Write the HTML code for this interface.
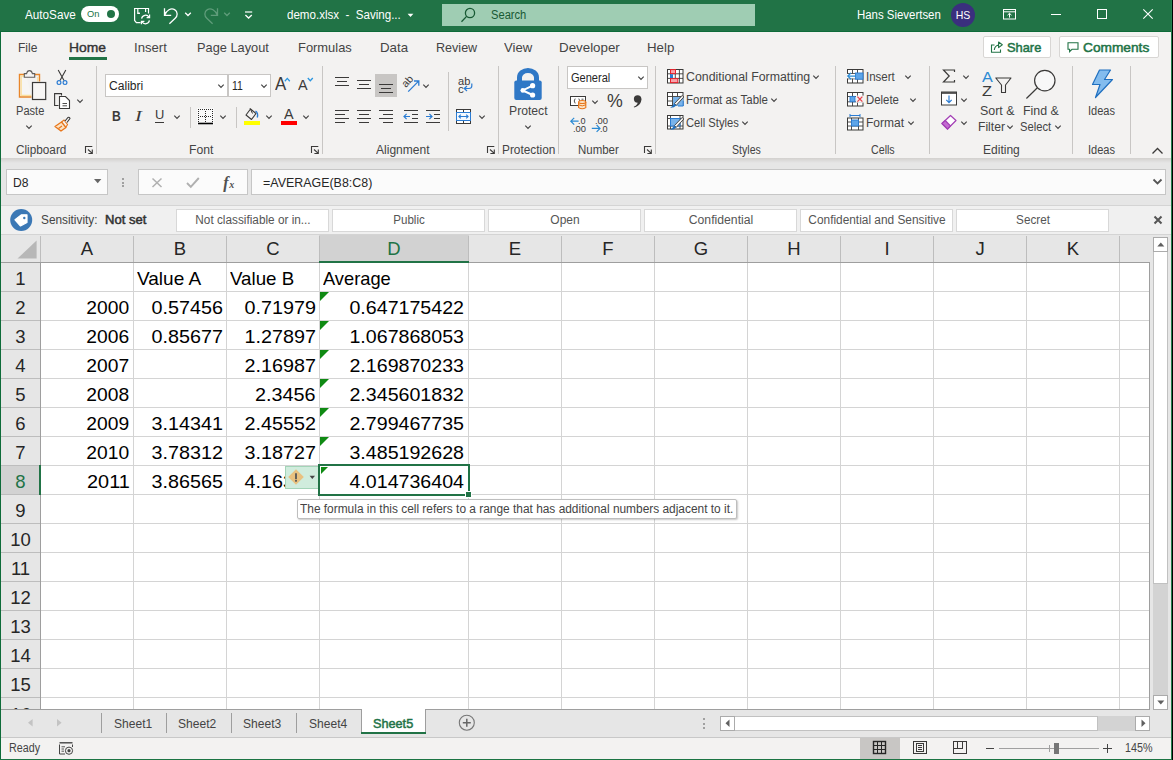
<!DOCTYPE html>
<html><head><meta charset="utf-8"><title>demo.xlsx - Excel</title><style>
html,body{margin:0;padding:0;}
body{width:1173px;height:760px;overflow:hidden;position:relative;background:#f3f2f1;font-family:"Liberation Sans",sans-serif;}
.a{position:absolute;box-sizing:border-box;}
.t{white-space:nowrap;}
svg{overflow:visible;}
</style></head><body>
<div class="a" style="left:0px;top:0px;width:1173px;height:31px;background:#217346;"></div>
<div class="a" style="left:0px;top:31px;width:1173px;height:1px;background:#0e6b39;"></div>
<div class="a" style="left:442px;top:4px;width:313px;height:22px;background:#9fcdb3;"></div>
<div class="a t" id="t1" style="top:6px;line-height:18px;height:18px;font-size:12.5px;color:#fff;left:24.5px;transform-origin:0 50%;transform:scaleX(0.9369);">AutoSave</div>
<div class="a" style="left:81px;top:6px;width:38px;height:16px;background:#fff;border-radius:8px;"></div>
<div class="a t" id="t2" style="top:6px;line-height:16px;height:16px;font-size:9.5px;color:#217346;left:86.8px;transform-origin:0 50%;transform:scaleX(0.9773);">On</div>
<div class="a" style="left:106.8px;top:10px;width:8.2px;height:8.2px;background:#217346;border-radius:50%;"></div>
<svg class="a" style="left:134px;top:7px;" width="17" height="18" viewBox="0 0 17 18"><path d="M14.5 6.5 V1.5 H0.6 V13.5 L2.4 15.6 H6.5" fill="none" stroke="#fff" stroke-width="1.2"/><path d="M3.8 1.5 V6.3 H5.6 M11.6 1.5 V5" fill="none" stroke="#fff" stroke-width="1.2"/><path d="M3.8 6.3 H6" stroke="#fff" stroke-width="1.2"/><path d="M7.6 11.6 A4 4 0 0 1 15 10.2 M15.6 7.6 V10.6 H12.6 M15.4 13.4 A4 4 0 0 1 8 14.8 M7.4 17.2 V14.3 H10.4" fill="none" stroke="#fff" stroke-width="1.2"/></svg>
<svg class="a" style="left:163px;top:7px;" width="17" height="18" viewBox="0 0 17 18"><path d="M1.5 1.2 V8.3 H8.2 M1.7 8.1 C3.5 3.2 8 0.6 11.6 2.6 C15.2 4.8 14.6 9 12.2 11.2 L6.4 16.8" fill="none" stroke="#fff" stroke-width="1.3"/></svg>
<svg class="a" style="left:182.5px;top:9.9px;" width="10" height="8" viewBox="0 0 10 8"><path d="M2.2 2.7 L5 5.5 L7.8 2.7" fill="none" stroke="#fff" stroke-width="1.3"/></svg>
<svg class="a" style="left:202px;top:7px;" width="17" height="18" viewBox="0 0 17 18"><path d="M15.5 1.2 V8.3 H8.8 M15.3 8.1 C13.5 3.2 9 0.6 5.4 2.6 C1.8 4.8 2.4 9 4.8 11.2 L10.6 16.8" fill="none" stroke="#5f9c7a" stroke-width="1.3"/></svg>
<svg class="a" style="left:221.5px;top:9.9px;" width="10" height="8" viewBox="0 0 10 8"><path d="M2.2 2.7 L5 5.5 L7.8 2.7" fill="none" stroke="#5f9c7a" stroke-width="1.3"/></svg>
<svg class="a" style="left:244px;top:11px;" width="10" height="9" viewBox="0 0 10 9"><path d="M1 1 H8.2" stroke="#fff" stroke-width="1.2"/><path d="M1.4 4 L4.6 7 L7.8 4" fill="none" stroke="#fff" stroke-width="1.3"/></svg>
<div class="a t" id="t3" style="top:6px;line-height:18px;height:18px;font-size:12.5px;color:#fff;left:287px;transform-origin:0 50%;transform:scaleX(0.9254);">demo.xlsx&nbsp; -&nbsp; Saving...</div>
<svg class="a" style="left:407px;top:13px;" width="8" height="5" viewBox="0 0 8 5"><path d="M0.6 0.8 L6.4 0.8 L3.5 4 Z" fill="#fff"/></svg>
<div class="a t" id="t4" style="top:6px;line-height:18px;height:18px;font-size:12.5px;color:#185a34;left:491px;transform-origin:0 50%;transform:scaleX(0.8912);">Search</div>
<svg class="a" style="left:459px;top:6px;" width="18" height="18" viewBox="0 0 18 18"><circle cx="11" cy="7" r="4.6" fill="none" stroke="#185a34" stroke-width="1.3"/><path d="M7.6 10.4 L2.5 15.8" stroke="#185a34" stroke-width="1.3"/></svg>
<div class="a t" id="t5" style="top:6px;line-height:18px;height:18px;font-size:12.5px;color:#fff;left:857px;transform-origin:0 50%;transform:scaleX(0.9137);">Hans Sievertsen</div>
<div class="a" style="left:951px;top:3px;width:24px;height:24px;background:#3a2f7e;border-radius:50%;"></div>
<div class="a t" id="t6" style="top:7px;line-height:16px;height:16px;font-size:10.5px;color:#fff;left:663px;width:600px;text-align:center;transform-origin:50% 50%;">HS</div>
<svg class="a" style="left:1003px;top:9px;" width="14" height="11" viewBox="0 0 14 11"><rect x="0.5" y="0.5" width="12" height="9.5" fill="none" stroke="#fff" stroke-width="1"/><path d="M0.5 2.8 H12.5" stroke="#fff" stroke-width="1"/><path d="M6.5 8.6 V4.4 M4.5 6.2 L6.5 4.3 L8.5 6.2" fill="none" stroke="#fff" stroke-width="1"/></svg>
<div class="a" style="left:1051px;top:14px;width:10px;height:1px;background:#fff;"></div>
<div class="a" style="left:1097px;top:9px;width:10px;height:10px;border:1px solid #fff;"></div>
<svg class="a" style="left:1143px;top:9px;" width="10" height="10" viewBox="0 0 10 10"><path d="M0.3 0.3 L9.7 9.7 M9.7 0.3 L0.3 9.7" stroke="#fff" stroke-width="1.1"/></svg>
<div class="a" style="left:1px;top:32px;width:1170px;height:30px;background:#f3f2f1;"></div>
<div class="a t" id="t7" style="top:38px;line-height:20px;height:20px;font-size:13.3px;color:#444;left:18px;transform-origin:0 50%;transform:scaleX(0.9050);">File</div>
<div class="a t" id="t8" style="top:38px;line-height:20px;height:20px;font-size:13.3px;color:#444;left:134px;transform-origin:0 50%;transform:scaleX(0.9860);">Insert</div>
<div class="a t" id="t9" style="top:38px;line-height:20px;height:20px;font-size:13.3px;color:#444;left:197px;transform-origin:0 50%;transform:scaleX(0.9615);">Page Layout</div>
<div class="a t" id="t10" style="top:38px;line-height:20px;height:20px;font-size:13.3px;color:#444;left:298px;transform-origin:0 50%;transform:scaleX(0.9707);">Formulas</div>
<div class="a t" id="t11" style="top:38px;line-height:20px;height:20px;font-size:13.3px;color:#444;left:379.7px;transform-origin:0 50%;transform:scaleX(1.0002);">Data</div>
<div class="a t" id="t12" style="top:38px;line-height:20px;height:20px;font-size:13.3px;color:#444;left:436px;transform-origin:0 50%;transform:scaleX(0.9448);">Review</div>
<div class="a t" id="t13" style="top:38px;line-height:20px;height:20px;font-size:13.3px;color:#444;left:503.8px;transform-origin:0 50%;transform:scaleX(0.9862);">View</div>
<div class="a t" id="t14" style="top:38px;line-height:20px;height:20px;font-size:13.3px;color:#444;left:559px;transform-origin:0 50%;transform:scaleX(1.0031);">Developer</div>
<div class="a t" id="t15" style="top:38px;line-height:20px;height:20px;font-size:13.3px;color:#444;left:647px;transform-origin:0 50%;transform:scaleX(0.9978);">Help</div>
<div class="a t" id="t16" style="top:38px;line-height:20px;height:20px;font-size:13.3px;color:#333;left:69px;transform-origin:0 50%;transform:scaleX(1.0427);-webkit-text-stroke:0.4px #333;">Home</div>
<div class="a" style="left:69px;top:57px;width:38px;height:3px;background:#217346;"></div>
<div class="a" style="left:983px;top:36px;width:68px;height:22px;background:#fff;border:1px solid #d8d6d4;border-radius:2px;"></div>
<div class="a" style="left:1059px;top:36px;width:100px;height:22px;background:#fff;border:1px solid #d8d6d4;border-radius:2px;"></div>
<div class="a t" id="t17" style="top:38px;line-height:20px;height:20px;font-size:13.3px;color:#217346;left:1006.6px;transform-origin:0 50%;transform:scaleX(0.9666);-webkit-text-stroke:0.5px #217346;">Share</div>
<div class="a t" id="t18" style="top:38px;line-height:20px;height:20px;font-size:13.3px;color:#217346;left:1082.6px;transform-origin:0 50%;transform:scaleX(1.0312);-webkit-text-stroke:0.5px #217346;">Comments</div>
<svg class="a" style="left:990px;top:40px;" width="15" height="14" viewBox="0 0 15 14"><path d="M4.5 5 H1.5 V12.2 H10.5 V9.5" fill="none" stroke="#217346" stroke-width="1.1"/><path d="M4.3 10 C4.6 7 6.5 5.3 9 5 M8.6 2 L12.3 4.7 L8.6 7.6 Z" fill="none" stroke="#217346" stroke-width="1.1" stroke-linejoin="round"/></svg>
<svg class="a" style="left:1066px;top:40px;" width="15" height="14" viewBox="0 0 15 14"><path d="M2 2.8 H12 V9.3 H6 L3.6 11.6 V9.3 H2 Z" fill="none" stroke="#217346" stroke-width="1.1"/></svg>
<div class="a" style="left:96px;top:66px;width:1px;height:88px;background:#c8c6c4;"></div>
<div class="a" style="left:322px;top:66px;width:1px;height:88px;background:#c8c6c4;"></div>
<div class="a" style="left:498px;top:66px;width:1px;height:88px;background:#c8c6c4;"></div>
<div class="a" style="left:558px;top:66px;width:1px;height:88px;background:#c8c6c4;"></div>
<div class="a" style="left:655px;top:66px;width:1px;height:88px;background:#c8c6c4;"></div>
<div class="a" style="left:835px;top:66px;width:1px;height:88px;background:#c8c6c4;"></div>
<div class="a" style="left:929px;top:66px;width:1px;height:88px;background:#c8c6c4;"></div>
<div class="a" style="left:1072px;top:66px;width:1px;height:88px;background:#c8c6c4;"></div>
<div class="a" style="left:1130px;top:66px;width:1px;height:88px;background:#c8c6c4;"></div>
<div class="a" style="left:1px;top:158px;width:1170px;height:5px;background:linear-gradient(#d2d0ce,#e6e6e6);"></div>
<svg class="a" style="left:18px;top:69px;" width="30" height="32" viewBox="0 0 30 32"><path d="M8 5.5 H1.5 V28 H13.5" fill="#f6f5f4" stroke="#e8862a" stroke-width="1.4"/><path d="M7 7.2 H3.2 V26.3 H13.5" fill="none" stroke="#fbdf9a" stroke-width="1.2"/><path d="M17 5.5 H21.5 V12.5" fill="none" stroke="#e8862a" stroke-width="1.4"/><path d="M19.8 8 V12.5" fill="none" stroke="#fbdf9a" stroke-width="1.2"/><path d="M6.3 8.2 V4.6 H8.6 C9.4 0.6 13.6 0.6 14.4 4.6 H16.7 V8.2 Z" fill="#f6f5f4" stroke="#605e5c" stroke-width="1.1"/><rect x="14.5" y="13.5" width="13.2" height="17" fill="#f7f6f5" stroke="#3b3a39" stroke-width="1.2"/></svg>
<div class="a t" id="t19" style="top:102px;line-height:18px;height:18px;font-size:12px;color:#444;left:15.8px;transform-origin:0 50%;transform:scaleX(0.9222);">Paste</div>
<svg class="a" style="left:24.3px;top:122.5px;" width="10" height="8" viewBox="0 0 10 8"><path d="M2.3 2.7 L5 5.4 L7.7 2.7" fill="none" stroke="#444" stroke-width="1.2"/></svg>
<svg class="a" style="left:56px;top:69px;" width="12" height="17" viewBox="0 0 12 17"><path d="M2.2 1 L8 11.5 M9.8 1 L4 11.5" stroke="#3b3a39" stroke-width="1.1" fill="none"/><circle cx="3" cy="13.6" r="1.9" fill="none" stroke="#2b7cd3" stroke-width="1.2"/><circle cx="9" cy="13.6" r="1.9" fill="none" stroke="#2b7cd3" stroke-width="1.2"/></svg>
<svg class="a" style="left:54px;top:93px;" width="17" height="17" viewBox="0 0 17 17"><path d="M4.5 12.5 H0.6 V0.6 H7.5 V2.5" fill="none" stroke="#3b3a39" stroke-width="1.1"/><path d="M5.5 3.5 H11.5 L15.5 7.5 V15.5 H5.5 Z" fill="#fff" stroke="#3b3a39" stroke-width="1.1"/><path d="M8.5 10.5 H13 M8.5 12.8 H13" stroke="#3b3a39" stroke-width="0.9"/></svg>
<svg class="a" style="left:74.6px;top:97px;" width="10" height="8" viewBox="0 0 10 8"><path d="M2.3 2.7 L5 5.4 L7.7 2.7" fill="none" stroke="#444" stroke-width="1.2"/></svg>
<svg class="a" style="left:54px;top:116px;" width="17" height="16" viewBox="0 0 17 16"><path d="M1 10.5 L7.5 6 L12 11.5 L7 15 Z" fill="#fbe3c5" stroke="#e8761a" stroke-width="1.3" stroke-linejoin="round"/><path d="M4.5 12.5 L8 10 M7.5 6 L10 4 L13.5 8.5 L12 11" fill="none" stroke="#e8761a" stroke-width="1.1"/><path d="M11 5 L14 1.5 Q15.5 0.8 16 2.5 L13 6.5" fill="#f3f2f1" stroke="#3b3a39" stroke-width="1.1"/></svg>
<div class="a t" id="t20" style="top:141px;line-height:18px;height:18px;font-size:12px;color:#444;left:15.7px;transform-origin:0 50%;transform:scaleX(0.9810);">Clipboard</div>
<svg class="a" style="left:85px;top:146px;" width="9" height="9" viewBox="0 0 9 9"><path d="M0.5 7 V0.5 H7.3" fill="none" stroke="#3b3a39" stroke-width="1.1"/><path d="M3 3.5 L7 7.2 M7.3 3.6 V7.5 H3.4" fill="none" stroke="#3b3a39" stroke-width="1.1"/></svg>
<div class="a" style="left:105px;top:74px;width:123px;height:23px;background:#fff;border:1px solid #c8c6c4;"></div>
<div class="a" style="left:228px;top:74px;width:43px;height:23px;background:#fff;border:1px solid #c8c6c4;border-left:none;"></div>
<div class="a" style="left:227px;top:74px;width:2px;height:23px;background:#c8c6c4;"></div>
<div class="a t" id="t21" style="top:77px;line-height:18px;height:18px;font-size:12.5px;color:#262626;left:108.6px;transform-origin:0 50%;transform:scaleX(0.9679);">Calibri</div>
<div class="a t" id="t22" style="top:77px;line-height:18px;height:18px;font-size:12.5px;color:#262626;left:232px;transform-origin:0 50%;transform:scaleX(0.8318);">11</div>
<svg class="a" style="left:216.3px;top:82.3px;" width="10" height="8" viewBox="0 0 10 8"><path d="M2.3 2.7 L5 5.4 L7.7 2.7" fill="none" stroke="#444" stroke-width="1.2"/></svg>
<svg class="a" style="left:259px;top:82.3px;" width="10" height="8" viewBox="0 0 10 8"><path d="M2.3 2.7 L5 5.4 L7.7 2.7" fill="none" stroke="#444" stroke-width="1.2"/></svg>
<div class="a t" id="t23" style="top:72px;line-height:24px;height:24px;font-size:18px;color:#3b3a39;left:275.2px;transform-origin:0 50%;transform:scaleX(0.9321);">A</div>
<svg class="a" style="left:284px;top:77px;" width="7" height="5" viewBox="0 0 7 5"><path d="M0.8 4.2 L3.3 1.4 L5.8 4.2" fill="none" stroke="#2b95e0" stroke-width="1.3"/></svg>
<div class="a t" id="t24" style="top:75px;line-height:20px;height:20px;font-size:14.5px;color:#3b3a39;left:298px;transform-origin:0 50%;transform:scaleX(0.9926);">A</div>
<svg class="a" style="left:306.5px;top:77px;" width="7" height="5" viewBox="0 0 7 5"><path d="M0.8 1 L3.3 3.8 L5.8 1" fill="none" stroke="#2b95e0" stroke-width="1.3"/></svg>
<div class="a t" id="t25" style="top:106px;line-height:20px;height:20px;font-size:14px;color:#3b3a39;font-weight:bold;left:112px;transform-origin:0 50%;transform:scaleX(0.8691);">B</div>
<div class="a t" id="t26" style="top:106px;line-height:20px;height:20px;font-size:15px;color:#3b3a39;font-family:'Liberation Serif',serif;left:135px;transform-origin:0 50%;transform:scaleX(1.3600);"><i>I</i></div>
<div class="a t" id="t27" style="top:105px;line-height:20px;height:20px;font-size:13.5px;color:#3b3a39;left:155px;transform-origin:0 50%;transform:scaleX(0.9538);">U</div>
<div class="a" style="left:155px;top:122px;width:9px;height:1px;background:#3b3a39;"></div>
<svg class="a" style="left:172px;top:113px;" width="10" height="8" viewBox="0 0 10 8"><path d="M2.3 2.7 L5 5.4 L7.7 2.7" fill="none" stroke="#444" stroke-width="1.2"/></svg>
<div class="a" style="left:190px;top:107px;width:1px;height:21px;background:#c8c6c4;"></div>
<svg class="a" style="left:197px;top:108px;" width="17" height="17" viewBox="0 0 17 17"><rect x="0" y="0" width="17" height="17" fill="#fafafa"/><rect x="1" y="1" width="1" height="1" fill="#2b2a29"/><rect x="3" y="1" width="1" height="1" fill="#2b2a29"/><rect x="5" y="1" width="1" height="1" fill="#2b2a29"/><rect x="7" y="1" width="1" height="1" fill="#2b2a29"/><rect x="9" y="1" width="1" height="1" fill="#2b2a29"/><rect x="11" y="1" width="1" height="1" fill="#2b2a29"/><rect x="13" y="1" width="1" height="1" fill="#2b2a29"/><rect x="15" y="1" width="1" height="1" fill="#2b2a29"/><rect x="1" y="3" width="1" height="1" fill="#2b2a29"/><rect x="15" y="3" width="1" height="1" fill="#2b2a29"/><rect x="1" y="5" width="1" height="1" fill="#2b2a29"/><rect x="15" y="5" width="1" height="1" fill="#2b2a29"/><rect x="1" y="7" width="1" height="1" fill="#2b2a29"/><rect x="15" y="7" width="1" height="1" fill="#2b2a29"/><rect x="1" y="9" width="1" height="1" fill="#2b2a29"/><rect x="15" y="9" width="1" height="1" fill="#2b2a29"/><rect x="1" y="11" width="1" height="1" fill="#2b2a29"/><rect x="15" y="11" width="1" height="1" fill="#2b2a29"/><rect x="1" y="13" width="1" height="1" fill="#2b2a29"/><rect x="15" y="13" width="1" height="1" fill="#2b2a29"/><rect x="8" y="3" width="1" height="1" fill="#2b2a29"/><rect x="8" y="5" width="1" height="1" fill="#2b2a29"/><rect x="8" y="11" width="1" height="1" fill="#2b2a29"/><rect x="8" y="13" width="1" height="1" fill="#2b2a29"/><rect x="3" y="8" width="1" height="1" fill="#2b2a29"/><rect x="5" y="8" width="1" height="1" fill="#2b2a29"/><rect x="11" y="8" width="1" height="1" fill="#2b2a29"/><rect x="13" y="8" width="1" height="1" fill="#2b2a29"/><rect x="8" y="7" width="1" height="1" fill="#2b2a29"/><rect x="7" y="8" width="1" height="1" fill="#2b2a29"/><rect x="9" y="8" width="1" height="1" fill="#2b2a29"/><rect x="8" y="9" width="1" height="1" fill="#2b2a29"/><rect x="1" y="14.7" width="15" height="1.6" fill="#000"/></svg>
<svg class="a" style="left:218.4px;top:113.4px;" width="10" height="8" viewBox="0 0 10 8"><path d="M2.3 2.7 L5 5.4 L7.7 2.7" fill="none" stroke="#444" stroke-width="1.2"/></svg>
<div class="a" style="left:236px;top:107px;width:1px;height:21px;background:#c8c6c4;"></div>
<svg class="a" style="left:244px;top:107px;" width="17" height="15" viewBox="0 0 17 15"><path d="M6.5 2 L2 8 L7.5 12.5 L12 6.5 Z" fill="none" stroke="#3b3a39" stroke-width="1.1" stroke-linejoin="round"/><path d="M8.5 6.5 L6 1.2" stroke="#3b3a39" stroke-width="1"/><path d="M11.5 4 Q14.5 6 13.3 10.5" fill="none" stroke="#2b7cd3" stroke-width="1.4"/></svg>
<div class="a" style="left:244px;top:121px;width:16px;height:4px;background:#ffff00;"></div>
<svg class="a" style="left:264px;top:113px;" width="10" height="8" viewBox="0 0 10 8"><path d="M2.3 2.7 L5 5.4 L7.7 2.7" fill="none" stroke="#444" stroke-width="1.2"/></svg>
<div class="a t" id="t28" style="top:104px;line-height:20px;height:20px;font-size:14.5px;color:#3b3a39;left:284.2px;transform-origin:0 50%;transform:scaleX(0.9926);">A</div>
<div class="a" style="left:281px;top:121px;width:16px;height:4px;background:#ff0000;"></div>
<svg class="a" style="left:301px;top:113px;" width="10" height="8" viewBox="0 0 10 8"><path d="M2.3 2.7 L5 5.4 L7.7 2.7" fill="none" stroke="#444" stroke-width="1.2"/></svg>
<div class="a t" id="t29" style="top:141px;line-height:18px;height:18px;font-size:12px;color:#444;left:189.4px;transform-origin:0 50%;transform:scaleX(1.0160);">Font</div>
<svg class="a" style="left:311px;top:146px;" width="9" height="9" viewBox="0 0 9 9"><path d="M0.5 7 V0.5 H7.3" fill="none" stroke="#3b3a39" stroke-width="1.1"/><path d="M3 3.5 L7 7.2 M7.3 3.6 V7.5 H3.4" fill="none" stroke="#3b3a39" stroke-width="1.1"/></svg>
<div class="a" style="left:335px;top:77px;width:14px;height:1px;background:#3b3a39;"></div>
<div class="a" style="left:337px;top:81px;width:10px;height:1px;background:#3b3a39;"></div>
<div class="a" style="left:335px;top:85px;width:14px;height:1px;background:#3b3a39;"></div>
<div class="a" style="left:357px;top:80px;width:14px;height:1px;background:#3b3a39;"></div>
<div class="a" style="left:359px;top:84px;width:10px;height:1px;background:#3b3a39;"></div>
<div class="a" style="left:357px;top:88px;width:14px;height:1px;background:#3b3a39;"></div>
<div class="a" style="left:375px;top:74px;width:22px;height:23px;background:#c8c6c4;"></div>
<div class="a" style="left:379px;top:84px;width:14px;height:1px;background:#3b3a39;"></div>
<div class="a" style="left:381px;top:88px;width:10px;height:1px;background:#3b3a39;"></div>
<div class="a" style="left:379px;top:92px;width:14px;height:1px;background:#3b3a39;"></div>
<svg class="a" style="left:402px;top:76px;" width="19" height="18" viewBox="0 0 19 18"><path d="M6.2 15.6 L16.4 5.4 M12 5 H16.8 V9.8" fill="none" stroke="#2b7cd3" stroke-width="1.3"/></svg>
<div class="a t" style="left:401px;top:75px;width:12px;height:12px;font-size:10.5px;color:#3b3a39;transform:rotate(-48deg);line-height:12px;text-align:center;">ab</div>
<svg class="a" style="left:421.4px;top:82px;" width="10" height="8" viewBox="0 0 10 8"><path d="M2.3 2.7 L5 5.4 L7.7 2.7" fill="none" stroke="#444" stroke-width="1.2"/></svg>
<div class="a" style="left:448px;top:72px;width:1px;height:59px;background:#c8c6c4;"></div>
<div class="a t" id="t30" style="top:76px;line-height:10px;height:10px;font-size:10.5px;color:#3b3a39;left:458px;transform-origin:0 50%;transform:scaleX(1.0524);">ab</div>
<div class="a t" id="t31" style="top:84px;line-height:10px;height:10px;font-size:10.5px;color:#3b3a39;left:458px;transform-origin:0 50%;transform:scaleX(1.1048);">c</div>
<svg class="a" style="left:463px;top:83px;" width="10" height="10" viewBox="0 0 10 10"><path d="M8.8 0.5 V3 Q8.8 5.5 6 5.5 H1.5 M4 3 L1.3 5.5 L4 8" fill="none" stroke="#2b7cd3" stroke-width="1.2"/></svg>
<div class="a" style="left:335px;top:110px;width:14px;height:1px;background:#3b3a39;"></div>
<div class="a" style="left:357px;top:110px;width:14px;height:1px;background:#3b3a39;"></div>
<div class="a" style="left:379px;top:110px;width:14px;height:1px;background:#3b3a39;"></div>
<div class="a" style="left:404px;top:110px;width:14px;height:1px;background:#3b3a39;"></div>
<div class="a" style="left:426px;top:110px;width:14px;height:1px;background:#3b3a39;"></div>
<div class="a" style="left:335px;top:114px;width:10px;height:1px;background:#3b3a39;"></div>
<div class="a" style="left:359px;top:114px;width:10px;height:1px;background:#3b3a39;"></div>
<div class="a" style="left:383px;top:114px;width:10px;height:1px;background:#3b3a39;"></div>
<div class="a" style="left:412px;top:114px;width:6px;height:1px;background:#3b3a39;"></div>
<div class="a" style="left:434px;top:114px;width:6px;height:1px;background:#3b3a39;"></div>
<div class="a" style="left:335px;top:118px;width:14px;height:1px;background:#3b3a39;"></div>
<div class="a" style="left:357px;top:118px;width:14px;height:1px;background:#3b3a39;"></div>
<div class="a" style="left:379px;top:118px;width:14px;height:1px;background:#3b3a39;"></div>
<div class="a" style="left:412px;top:118px;width:6px;height:1px;background:#3b3a39;"></div>
<div class="a" style="left:434px;top:118px;width:6px;height:1px;background:#3b3a39;"></div>
<div class="a" style="left:335px;top:122px;width:10px;height:1px;background:#3b3a39;"></div>
<div class="a" style="left:359px;top:122px;width:10px;height:1px;background:#3b3a39;"></div>
<div class="a" style="left:383px;top:122px;width:10px;height:1px;background:#3b3a39;"></div>
<div class="a" style="left:404px;top:122px;width:14px;height:1px;background:#3b3a39;"></div>
<div class="a" style="left:426px;top:122px;width:14px;height:1px;background:#3b3a39;"></div>
<svg class="a" style="left:403px;top:112px;" width="8" height="9" viewBox="0 0 8 9"><path d="M7 4.5 H1.2 M3.6 1.9 L1 4.5 L3.6 7.1" fill="none" stroke="#2b7cd3" stroke-width="1.2"/></svg>
<svg class="a" style="left:425px;top:112px;" width="8" height="9" viewBox="0 0 8 9"><path d="M1 4.5 H6.8 M4.4 1.9 L7 4.5 L4.4 7.1" fill="none" stroke="#2b7cd3" stroke-width="1.2"/></svg>
<svg class="a" style="left:456px;top:109px;" width="16" height="16" viewBox="0 0 16 16"><rect x="0.5" y="0.5" width="14" height="14" fill="#fff" stroke="#3b3a39" stroke-width="1"/><path d="M7.5 0.5 V3.5 M7.5 11.5 V14.5" stroke="#3b3a39" stroke-width="1"/><rect x="0.5" y="3.5" width="14" height="8" fill="#f4f9fe" stroke="#2b7cd3" stroke-width="1"/><path d="M3 7.5 H12 M4.8 5.6 L2.9 7.5 L4.8 9.4 M10.2 5.6 L12.1 7.5 L10.2 9.4" fill="none" stroke="#2b7cd3" stroke-width="1.1"/></svg>
<svg class="a" style="left:476.6px;top:113px;" width="10" height="8" viewBox="0 0 10 8"><path d="M2.3 2.7 L5 5.4 L7.7 2.7" fill="none" stroke="#444" stroke-width="1.2"/></svg>
<div class="a t" id="t32" style="top:141px;line-height:18px;height:18px;font-size:12px;color:#444;left:376px;transform-origin:0 50%;transform:scaleX(1.0042);">Alignment</div>
<svg class="a" style="left:487px;top:146px;" width="9" height="9" viewBox="0 0 9 9"><path d="M0.5 7 V0.5 H7.3" fill="none" stroke="#3b3a39" stroke-width="1.1"/><path d="M3 3.5 L7 7.2 M7.3 3.6 V7.5 H3.4" fill="none" stroke="#3b3a39" stroke-width="1.1"/></svg>
<svg class="a" style="left:514px;top:67px;" width="29" height="34" viewBox="0 0 29 34"><path d="M5.5 15 V10.5 A8.5 7 0 0 1 22.5 10.5 V15" fill="none" stroke="#2f78c6" stroke-width="5"/><rect x="0.3" y="13.4" width="27.4" height="19.6" rx="2" fill="#2f78c6"/><path d="M18.6 18.7 L8.7 23.4 L18.6 28" fill="none" stroke="#fff" stroke-width="2"/><circle cx="18.6" cy="18.7" r="2.6" fill="#fff"/><circle cx="18.6" cy="28" r="2.6" fill="#fff"/><circle cx="8.9" cy="23.4" r="2.4" fill="#fff"/></svg>
<div class="a t" id="t33" style="top:102px;line-height:18px;height:18px;font-size:12px;color:#444;left:509.2px;transform-origin:0 50%;transform:scaleX(1.0154);">Protect</div>
<svg class="a" style="left:522.7px;top:122.5px;" width="10" height="8" viewBox="0 0 10 8"><path d="M2.3 2.7 L5 5.4 L7.7 2.7" fill="none" stroke="#444" stroke-width="1.2"/></svg>
<div class="a t" id="t34" style="top:141px;line-height:18px;height:18px;font-size:12px;color:#444;left:502px;transform-origin:0 50%;transform:scaleX(0.9883);">Protection</div>
<div class="a" style="left:567px;top:66px;width:81px;height:23px;background:#fff;border:1px solid #c8c6c4;"></div>
<div class="a t" id="t35" style="top:69px;line-height:18px;height:18px;font-size:12.5px;color:#262626;left:570.5px;transform-origin:0 50%;transform:scaleX(0.8835);">General</div>
<svg class="a" style="left:636.4px;top:74.3px;" width="10" height="8" viewBox="0 0 10 8"><path d="M2.3 2.7 L5 5.4 L7.7 2.7" fill="none" stroke="#444" stroke-width="1.2"/></svg>
<svg class="a" style="left:570px;top:96px;" width="18" height="15" viewBox="0 0 18 15"><rect x="0.5" y="0.5" width="15" height="9" fill="#fff" stroke="#3b3a39" stroke-width="1"/><path d="M5.2 2.6 Q3.2 5 5.2 7.4 M8.8 2.6 Q10.8 5 8.8 7.4" fill="none" stroke="#3b3a39" stroke-width="0.9"/><path d="M11.5 3.2 H13.5" stroke="#3b3a39" stroke-width="0.9"/><path d="M8.6 6 V11.6 Q12.2 13.8 15.8 11.6 V6" fill="#fbe3c5" stroke="#e8761a" stroke-width="1.1"/><ellipse cx="12.2" cy="6" rx="3.6" ry="1.5" fill="#fbe3c5" stroke="#e8761a" stroke-width="1.1"/><path d="M8.6 8.8 Q12.2 11 15.8 8.8" fill="none" stroke="#e8761a" stroke-width="1"/></svg>
<svg class="a" style="left:590.4px;top:98px;" width="10" height="8" viewBox="0 0 10 8"><path d="M2.3 2.7 L5 5.4 L7.7 2.7" fill="none" stroke="#444" stroke-width="1.2"/></svg>
<div class="a t" id="t36" style="top:89px;line-height:24px;height:24px;font-size:18px;color:#3b3a39;left:607px;transform-origin:0 50%;transform:scaleX(0.9865);">%</div>
<svg class="a" style="left:632px;top:94px;" width="11" height="15" viewBox="0 0 11 15"><circle cx="5.6" cy="5" r="3.7" fill="#3b3a39"/><path d="M9.3 4.6 C9.8 9 6.8 12.4 2 13.6 L1.8 12.8 C4.8 11.4 6.2 9.6 5.8 7 Z" fill="#3b3a39"/></svg>
<svg class="a" style="left:570px;top:117px;" width="10" height="9" viewBox="0 0 10 9"><path d="M8.6 4.2 H1 M4.2 0.8 L0.8 4.2 L4.2 7.6" fill="none" stroke="#2b8ad3" stroke-width="1.2"/></svg>
<div class="a t" id="t37" style="top:116px;line-height:9px;height:9px;font-size:9.5px;color:#3b3a39;left:578px;transform-origin:0 50%;transform:scaleX(0.9575);">.0</div>
<div class="a t" id="t38" style="top:124px;line-height:9px;height:9px;font-size:9.5px;color:#3b3a39;left:572.7px;transform-origin:0 50%;transform:scaleX(0.9910);">.00</div>
<div class="a t" id="t39" style="top:116px;line-height:9px;height:9px;font-size:9.5px;color:#3b3a39;left:594.8px;transform-origin:0 50%;transform:scaleX(0.9910);">.00</div>
<svg class="a" style="left:591px;top:124px;" width="11" height="9" viewBox="0 0 11 9"><path d="M0.8 4.4 H9 M5.6 1 L9 4.4 L5.6 7.8" fill="none" stroke="#2b8ad3" stroke-width="1.2"/></svg>
<div class="a t" id="t40" style="top:124px;line-height:9px;height:9px;font-size:9.5px;color:#3b3a39;left:600.3px;transform-origin:0 50%;transform:scaleX(0.9575);">.0</div>
<div class="a t" id="t41" style="top:141px;line-height:18px;height:18px;font-size:12px;color:#444;left:578px;transform-origin:0 50%;transform:scaleX(0.9558);">Number</div>
<svg class="a" style="left:643.7px;top:146px;" width="9" height="9" viewBox="0 0 9 9"><path d="M0.5 7 V0.5 H7.3" fill="none" stroke="#3b3a39" stroke-width="1.1"/><path d="M3 3.5 L7 7.2 M7.3 3.6 V7.5 H3.4" fill="none" stroke="#3b3a39" stroke-width="1.1"/></svg>
<svg class="a" style="left:667px;top:69px;" width="16" height="14" viewBox="0 0 16 14"><rect x="0.5" y="0.5" width="15.5" height="13.5" fill="#fff" stroke="#3b3a39" stroke-width="1"/><path d="M0.5 4.8 H16 M0.5 9.4 H16 M3.5 0.5 V14 M8.3 0.5 V14 M12.4 0.5 V14" stroke="#3b3a39" stroke-width="0.9"/><rect x="3.5" y="0.6" width="5" height="4" fill="#f8a3ab" stroke="#e8212b" stroke-width="1"/><rect x="3" y="5.2" width="3" height="4" fill="#2b7cd3"/><rect x="3.5" y="9.6" width="7.3" height="4" fill="#f8a3ab" stroke="#e8212b" stroke-width="1"/></svg>
<svg class="a" style="left:667px;top:92px;" width="18" height="16" viewBox="0 0 18 16"><rect x="0.5" y="0.5" width="15.5" height="13" fill="#fff" stroke="#3b3a39" stroke-width="1"/><path d="M0.5 4.5 H16 M5.5 0.5 V13.5 M10.5 0.5 V4.5 M0.5 9 H5.5" stroke="#3b3a39" stroke-width="0.9"/><rect x="6" y="5" width="10.5" height="9" fill="#79b3ea"/><path d="M16.2 9 V14 H11" fill="none" stroke="#2b7cd3" stroke-width="1"/><path d="M15.2 3.4 L7.4 11.6 L9.2 13.4 L16.8 5.0 Z" fill="#f3f2f1" stroke="#3b3a39" stroke-width="0.9" stroke-linejoin="round"/><path d="M7.4 11.6 L9.2 13.4 Q7.2 16.0 3.2 15.8 Q5.6 14.200000000000001 7.4 11.6 Z" fill="#1f6fbf"/></svg>
<svg class="a" style="left:667px;top:115px;" width="18" height="16" viewBox="0 0 18 16"><rect x="0.5" y="0.5" width="15.5" height="13.5" fill="#fff" stroke="#3b3a39" stroke-width="1"/><path d="M0.5 3.5 H16 M3.5 0.5 V14 M0.5 11 H16 M13 0.5 V14" stroke="#3b3a39" stroke-width="0.9"/><rect x="3.5" y="3.5" width="9.5" height="7.5" fill="#79b3ea" stroke="#2b7cd3" stroke-width="1"/><path d="M15.2 2.4 L7.4 10.6 L9.2 12.4 L16.8 4.0 Z" fill="#f3f2f1" stroke="#3b3a39" stroke-width="0.9" stroke-linejoin="round"/><path d="M7.4 10.6 L9.2 12.4 Q7.2 15.0 3.2 14.8 Q5.6 13.200000000000001 7.4 10.6 Z" fill="#1f6fbf"/></svg>
<div class="a t" id="t42" style="top:68px;line-height:18px;height:18px;font-size:12px;color:#444;left:685.7px;transform-origin:0 50%;transform:scaleX(1.0287);">Conditional Formatting</div>
<svg class="a" style="left:811px;top:72.7px;" width="10" height="8" viewBox="0 0 10 8"><path d="M2.3 2.7 L5 5.4 L7.7 2.7" fill="none" stroke="#444" stroke-width="1.2"/></svg>
<div class="a t" id="t43" style="top:91px;line-height:18px;height:18px;font-size:12px;color:#444;left:685.7px;transform-origin:0 50%;transform:scaleX(0.9554);">Format as Table</div>
<svg class="a" style="left:769.3px;top:95.8px;" width="10" height="8" viewBox="0 0 10 8"><path d="M2.3 2.7 L5 5.4 L7.7 2.7" fill="none" stroke="#444" stroke-width="1.2"/></svg>
<div class="a t" id="t44" style="top:114px;line-height:18px;height:18px;font-size:12px;color:#444;left:685.7px;transform-origin:0 50%;transform:scaleX(0.9314);">Cell Styles</div>
<svg class="a" style="left:740.3px;top:118.7px;" width="10" height="8" viewBox="0 0 10 8"><path d="M2.3 2.7 L5 5.4 L7.7 2.7" fill="none" stroke="#444" stroke-width="1.2"/></svg>
<div class="a t" id="t45" style="top:141px;line-height:18px;height:18px;font-size:12px;color:#444;left:731.6px;transform-origin:0 50%;transform:scaleX(0.8811);">Styles</div>
<svg class="a" style="left:847px;top:69px;" width="17" height="15" viewBox="0 0 17 15"><rect x="0.5" y="0.5" width="15.5" height="13.5" fill="#fff" stroke="#3b3a39" stroke-width="1"/><path d="M0.5 4.5 H16 M0.5 9.8 H16 M5.5 0.5 V14 M10.5 0.5 V14" stroke="#3b3a39" stroke-width="0.9"/><rect x="8.4" y="4" width="7.6" height="6.2" fill="#5ea5e8" stroke="#2b7cd3" stroke-width="0.9"/><rect x="0" y="4.9" width="8" height="4.5" fill="#fff"/><path d="M9 7.1 H0.8 M4 3.9 L0.8 7.1 L4 10.3" fill="none" stroke="#2b8ad3" stroke-width="1.3"/></svg>
<svg class="a" style="left:847px;top:92px;" width="17" height="15" viewBox="0 0 17 15"><rect x="0.5" y="0.5" width="15.5" height="13.5" fill="#fff" stroke="#3b3a39" stroke-width="1"/><path d="M0.5 4.5 H16 M0.5 9.8 H16 M5.5 0.5 V14 M10.5 0.5 V14" stroke="#3b3a39" stroke-width="0.9"/><rect x="9" y="3.6" width="8" height="7" fill="#f3f2f1"/><rect x="3" y="4.4" width="5" height="5.4" fill="#5ea5e8" stroke="#2b7cd3" stroke-width="0.9"/><path d="M10.4 4.6 L15.4 9.6 M15.4 4.6 L10.4 9.6" stroke="#e8414a" stroke-width="1.3"/></svg>
<svg class="a" style="left:847px;top:114px;" width="17" height="17" viewBox="0 0 17 17"><path d="M3 1.5 H13 M3 0 V3 M13 0 V3" stroke="#2b7cd3" stroke-width="1"/><rect x="0.5" y="4" width="15.5" height="12" fill="#fff" stroke="#3b3a39" stroke-width="1"/><path d="M0.5 8 H16 M0.5 12 H16 M4.5 4 V16 M11.5 4 V16" stroke="#3b3a39" stroke-width="0.9"/><rect x="4.5" y="6" width="7" height="6" fill="#5ea5e8" stroke="#2b7cd3" stroke-width="0.9"/></svg>
<div class="a t" id="t46" style="top:68px;line-height:18px;height:18px;font-size:12px;color:#444;left:865.5px;transform-origin:0 50%;transform:scaleX(0.9595);">Insert</div>
<svg class="a" style="left:903px;top:72.7px;" width="10" height="8" viewBox="0 0 10 8"><path d="M2.3 2.7 L5 5.4 L7.7 2.7" fill="none" stroke="#444" stroke-width="1.2"/></svg>
<div class="a t" id="t47" style="top:91px;line-height:18px;height:18px;font-size:12px;color:#444;left:865.5px;transform-origin:0 50%;transform:scaleX(0.9485);">Delete</div>
<svg class="a" style="left:907.6px;top:95.8px;" width="10" height="8" viewBox="0 0 10 8"><path d="M2.3 2.7 L5 5.4 L7.7 2.7" fill="none" stroke="#444" stroke-width="1.2"/></svg>
<div class="a t" id="t48" style="top:114px;line-height:18px;height:18px;font-size:12px;color:#444;left:865.5px;transform-origin:0 50%;transform:scaleX(0.9996);">Format</div>
<svg class="a" style="left:906px;top:118.7px;" width="10" height="8" viewBox="0 0 10 8"><path d="M2.3 2.7 L5 5.4 L7.7 2.7" fill="none" stroke="#444" stroke-width="1.2"/></svg>
<div class="a t" id="t49" style="top:141px;line-height:18px;height:18px;font-size:12px;color:#444;left:870.6px;transform-origin:0 50%;transform:scaleX(0.8886);">Cells</div>
<svg class="a" style="left:942px;top:69px;" width="14" height="14" viewBox="0 0 14 14"><path d="M12.5 3 V1 H1.5 L7.2 7 L1.5 13 H12.5 V11" fill="none" stroke="#3b3a39" stroke-width="1.2"/></svg>
<svg class="a" style="left:961px;top:72.7px;" width="10" height="8" viewBox="0 0 10 8"><path d="M2.3 2.7 L5 5.4 L7.7 2.7" fill="none" stroke="#444" stroke-width="1.2"/></svg>
<svg class="a" style="left:941px;top:91px;" width="17" height="16" viewBox="0 0 17 16"><rect x="0.5" y="1" width="15" height="13" fill="#fff" stroke="#3b3a39" stroke-width="1"/><path d="M0.5 2 H15.5" stroke="#3b3a39" stroke-width="1.6"/><path d="M8 4.5 V11.5 M5.3 8.8 L8 11.6 L10.7 8.8" fill="none" stroke="#2b7cd3" stroke-width="1.2"/></svg>
<svg class="a" style="left:959px;top:95.8px;" width="10" height="8" viewBox="0 0 10 8"><path d="M2.3 2.7 L5 5.4 L7.7 2.7" fill="none" stroke="#444" stroke-width="1.2"/></svg>
<svg class="a" style="left:941px;top:114px;" width="17" height="17" viewBox="0 0 17 17"><path d="M1 9.5 L9.5 1.5 L15 6.5 L6.5 15 Z" fill="#fff" stroke="#a33fb5" stroke-width="1.2" stroke-linejoin="round"/><path d="M1 9.5 L4.2 6.5 L9.5 11.8 L6.5 15 Z" fill="#c36bd1" stroke="#a33fb5" stroke-width="1.2" stroke-linejoin="round"/></svg>
<svg class="a" style="left:959px;top:118.7px;" width="10" height="8" viewBox="0 0 10 8"><path d="M2.3 2.7 L5 5.4 L7.7 2.7" fill="none" stroke="#444" stroke-width="1.2"/></svg>
<div class="a t" id="t50" style="top:66px;line-height:22px;height:22px;font-size:15.5px;color:#2b8ad3;left:982.2px;transform-origin:0 50%;transform:scaleX(1.0441);">A</div>
<div class="a t" id="t51" style="top:80px;line-height:22px;height:22px;font-size:15.5px;color:#3b3a39;left:981.8px;transform-origin:0 50%;transform:scaleX(1.0561);">Z</div>
<svg class="a" style="left:995px;top:77px;" width="18" height="18" viewBox="0 0 18 18"><path d="M0.8 1 H16 L10.5 8 V15.5 L6.5 15.5 V8 Z" fill="#f3f2f1" stroke="#3b3a39" stroke-width="1.1" stroke-linejoin="round"/></svg>
<div class="a t" id="t52" style="top:102px;line-height:18px;height:18px;font-size:12px;color:#444;left:980px;transform-origin:0 50%;transform:scaleX(1.0372);">Sort &amp;</div>
<div class="a t" id="t53" style="top:118px;line-height:18px;height:18px;font-size:12px;color:#444;left:978.4px;transform-origin:0 50%;transform:scaleX(1.0123);">Filter</div>
<svg class="a" style="left:1005.3px;top:123px;" width="10" height="8" viewBox="0 0 10 8"><path d="M2.3 2.7 L5 5.4 L7.7 2.7" fill="none" stroke="#444" stroke-width="1.2"/></svg>
<svg class="a" style="left:1025px;top:69px;" width="32" height="31" viewBox="0 0 32 31"><circle cx="19.8" cy="11.6" r="10.2" fill="#f8f8f8" stroke="#3b3a39" stroke-width="1.2"/><path d="M12.4 18.8 L1.4 29.5" stroke="#3b3a39" stroke-width="1.2"/></svg>
<div class="a t" id="t54" style="top:102px;line-height:18px;height:18px;font-size:12px;color:#444;left:1023.4px;transform-origin:0 50%;transform:scaleX(1.0321);">Find &amp;</div>
<div class="a t" id="t55" style="top:118px;line-height:18px;height:18px;font-size:12px;color:#444;left:1020.3px;transform-origin:0 50%;transform:scaleX(0.9323);">Select</div>
<svg class="a" style="left:1052.8px;top:123px;" width="10" height="8" viewBox="0 0 10 8"><path d="M2.3 2.7 L5 5.4 L7.7 2.7" fill="none" stroke="#444" stroke-width="1.2"/></svg>
<div class="a t" id="t56" style="top:141px;line-height:18px;height:18px;font-size:12px;color:#444;left:982.5px;transform-origin:0 50%;transform:scaleX(1.0026);">Editing</div>
<svg class="a" style="left:1091px;top:69px;" width="23" height="30" viewBox="0 0 23 30"><path d="M8.5 1 H19.5 L13.5 10.5 H21.5 L4.5 28.5 L9 15.5 H1.5 Z" fill="#83bcee" stroke="#1f6fbf" stroke-width="1.2" stroke-linejoin="round"/></svg>
<div class="a t" id="t57" style="top:102px;line-height:18px;height:18px;font-size:12px;color:#444;left:1088.4px;transform-origin:0 50%;transform:scaleX(0.9196);">Ideas</div>
<div class="a t" id="t58" style="top:141px;line-height:18px;height:18px;font-size:12px;color:#444;left:1088.4px;transform-origin:0 50%;transform:scaleX(0.9196);">Ideas</div>
<svg class="a" style="left:1151px;top:147px;" width="13" height="8" viewBox="0 0 13 8"><path d="M1.5 6.5 L6.5 1.5 L11.5 6.5" fill="none" stroke="#3b3a39" stroke-width="1.3"/></svg>
<div class="a" style="left:1px;top:163px;width:1170px;height:43px;background:#e6e6e6;"></div>
<div class="a" style="left:6px;top:169px;width:102px;height:26px;background:#fbfbfb;border:1px solid #c6c6c6;"></div>
<div class="a t" id="t59" style="top:174px;line-height:18px;height:18px;font-size:12.5px;color:#262626;left:12.8px;transform-origin:0 50%;transform:scaleX(0.9697);">D8</div>
<svg class="a" style="left:94px;top:179px;" width="8" height="5" viewBox="0 0 8 5"><path d="M0 0 H7.4 L3.7 4.2 Z" fill="#666"/></svg>
<div class="a" style="left:122px;top:178px;width:2px;height:2px;background:#a0a0a0;"></div>
<div class="a" style="left:122px;top:181.5px;width:2px;height:2px;background:#a0a0a0;"></div>
<div class="a" style="left:122px;top:185px;width:2px;height:2px;background:#a0a0a0;"></div>
<div class="a" style="left:138px;top:169px;width:110px;height:26px;background:#fbfbfb;border:1px solid #c6c6c6;"></div>
<svg class="a" style="left:152px;top:178px;" width="10" height="10" viewBox="0 0 10 10"><path d="M0.5 0.5 L9.5 9 M9.5 0.5 L0.5 9" stroke="#b0b0b0" stroke-width="1.5"/></svg>
<svg class="a" style="left:186px;top:177px;" width="14" height="11" viewBox="0 0 14 11"><path d="M1 6 L4.8 9.8 L12.8 1" fill="none" stroke="#b0b0b0" stroke-width="1.9"/></svg>
<div class="a t" id="t60" style="top:172px;line-height:22px;height:22px;font-size:16px;color:#505050;font-weight:bold;font-family:'Liberation Serif',serif;left:223.3px;transform-origin:0 50%;"><i>f</i></div>
<div class="a t" id="t61" style="top:180px;line-height:10px;height:10px;font-size:10px;color:#505050;font-weight:bold;font-family:'Liberation Serif',serif;left:229.3px;transform-origin:0 50%;"><i>x</i></div>
<div class="a" style="left:251px;top:169px;width:915px;height:26px;background:#fbfbfb;border:1px solid #c6c6c6;"></div>
<div class="a t" id="t62" style="top:174px;line-height:18px;height:18px;font-size:12.5px;color:#262626;left:262.6px;transform-origin:0 50%;transform:scaleX(0.9946);">=AVERAGE(B8:C8)</div>
<svg class="a" style="left:1152px;top:178px;" width="11" height="8" viewBox="0 0 11 8"><path d="M1.5 1.5 L5.5 5.5 L9.5 1.5" fill="none" stroke="#555" stroke-width="1.8"/></svg>
<div class="a" style="left:1px;top:205px;width:1170px;height:30px;background:#f0f0f0;border-top:1px solid #d4d4d4;border-bottom:1px solid #d4d4d4;"></div>
<svg class="a" style="left:10px;top:209px;" width="23" height="23" viewBox="0 0 23 23"><circle cx="11.2" cy="11" r="11" fill="#3b78b5"/><path d="M5 10.8 L11.5 5.8 H17 V13.5 L10.5 17 Z" fill="#fff" stroke="#fff" stroke-width="1.2" stroke-linejoin="round"/><circle cx="14.3" cy="9" r="1.2" fill="#3b78b5"/></svg>
<div class="a t" id="t63" style="top:211px;line-height:18px;height:18px;font-size:12px;color:#444;left:41px;transform-origin:0 50%;transform:scaleX(0.9850);">Sensitivity:</div>
<div class="a t" id="t64" style="top:211px;line-height:18px;height:18px;font-size:12px;color:#333;left:105px;transform-origin:0 50%;transform:scaleX(1.0864);-webkit-text-stroke:0.5px #333;">Not set</div>
<div class="a" style="left:176px;top:209px;width:153px;height:23px;background:#fff;border:1px solid #d8d8d8;"></div>
<div class="a t" id="t65" style="top:211px;line-height:18px;height:18px;font-size:12px;color:#555;left:-47px;width:600px;text-align:center;transform-origin:50% 50%;transform:scaleX(0.9822);">Not classifiable or in...</div>
<div class="a" style="left:332px;top:209px;width:153px;height:23px;background:#fff;border:1px solid #d8d8d8;"></div>
<div class="a t" id="t66" style="top:211px;line-height:18px;height:18px;font-size:12px;color:#555;left:109px;width:600px;text-align:center;transform-origin:50% 50%;transform:scaleX(0.9637);">Public</div>
<div class="a" style="left:488px;top:209px;width:153px;height:23px;background:#fff;border:1px solid #d8d8d8;"></div>
<div class="a t" id="t67" style="top:211px;line-height:18px;height:18px;font-size:12px;color:#555;left:265px;width:600px;text-align:center;transform-origin:50% 50%;transform:scaleX(0.9980);">Open</div>
<div class="a" style="left:644px;top:209px;width:153px;height:23px;background:#fff;border:1px solid #d8d8d8;"></div>
<div class="a t" id="t68" style="top:211px;line-height:18px;height:18px;font-size:12px;color:#555;left:421px;width:600px;text-align:center;transform-origin:50% 50%;transform:scaleX(1.0178);">Confidential</div>
<div class="a" style="left:800px;top:209px;width:153px;height:23px;background:#fff;border:1px solid #d8d8d8;"></div>
<div class="a t" id="t69" style="top:211px;line-height:18px;height:18px;font-size:12px;color:#555;left:577px;width:600px;text-align:center;transform-origin:50% 50%;transform:scaleX(0.9894);">Confidential and Sensitive</div>
<div class="a" style="left:956px;top:209px;width:153px;height:23px;background:#fff;border:1px solid #d8d8d8;"></div>
<div class="a t" id="t70" style="top:211px;line-height:18px;height:18px;font-size:12px;color:#555;left:733px;width:600px;text-align:center;transform-origin:50% 50%;transform:scaleX(0.9744);">Secret</div>
<svg class="a" style="left:1153px;top:215px;" width="10" height="10" viewBox="0 0 10 10"><path d="M1.5 1.5 L8.5 8.5 M8.5 1.5 L1.5 8.5" stroke="#555" stroke-width="2"/></svg>
<div class="a" style="left:1px;top:235px;width:1170px;height:475px;background:#e6e6e6;"></div>
<div class="a" style="left:41px;top:263px;width:1108px;height:446px;background:#fff;"></div>
<div class="a" style="left:319px;top:235px;width:150px;height:27px;background:#d2d2d2;"></div>
<div class="a" style="left:1px;top:466px;width:39px;height:28px;background:#d2d2d2;"></div>
<div class="a" style="left:133px;top:263px;width:1px;height:446px;background:#d4d4d4;"></div>
<div class="a" style="left:133px;top:236px;width:1px;height:26px;background:#bdbdbd;"></div>
<div class="a" style="left:226px;top:263px;width:1px;height:446px;background:#d4d4d4;"></div>
<div class="a" style="left:226px;top:236px;width:1px;height:26px;background:#bdbdbd;"></div>
<div class="a" style="left:319px;top:263px;width:1px;height:446px;background:#d4d4d4;"></div>
<div class="a" style="left:319px;top:236px;width:1px;height:26px;background:#bdbdbd;"></div>
<div class="a" style="left:468px;top:263px;width:1px;height:446px;background:#d4d4d4;"></div>
<div class="a" style="left:468px;top:236px;width:1px;height:26px;background:#bdbdbd;"></div>
<div class="a" style="left:561px;top:263px;width:1px;height:446px;background:#d4d4d4;"></div>
<div class="a" style="left:561px;top:236px;width:1px;height:26px;background:#bdbdbd;"></div>
<div class="a" style="left:654px;top:263px;width:1px;height:446px;background:#d4d4d4;"></div>
<div class="a" style="left:654px;top:236px;width:1px;height:26px;background:#bdbdbd;"></div>
<div class="a" style="left:747px;top:263px;width:1px;height:446px;background:#d4d4d4;"></div>
<div class="a" style="left:747px;top:236px;width:1px;height:26px;background:#bdbdbd;"></div>
<div class="a" style="left:840px;top:263px;width:1px;height:446px;background:#d4d4d4;"></div>
<div class="a" style="left:840px;top:236px;width:1px;height:26px;background:#bdbdbd;"></div>
<div class="a" style="left:933px;top:263px;width:1px;height:446px;background:#d4d4d4;"></div>
<div class="a" style="left:933px;top:236px;width:1px;height:26px;background:#bdbdbd;"></div>
<div class="a" style="left:1026px;top:263px;width:1px;height:446px;background:#d4d4d4;"></div>
<div class="a" style="left:1026px;top:236px;width:1px;height:26px;background:#bdbdbd;"></div>
<div class="a" style="left:1119px;top:263px;width:1px;height:446px;background:#d4d4d4;"></div>
<div class="a" style="left:1119px;top:236px;width:1px;height:26px;background:#bdbdbd;"></div>
<div class="a" style="left:40px;top:236px;width:1px;height:26px;background:#bdbdbd;"></div>
<div class="a" style="left:41px;top:291px;width:1108px;height:1px;background:#d4d4d4;"></div>
<div class="a" style="left:1px;top:291px;width:39px;height:1px;background:#bdbdbd;"></div>
<div class="a" style="left:41px;top:320px;width:1108px;height:1px;background:#d4d4d4;"></div>
<div class="a" style="left:1px;top:320px;width:39px;height:1px;background:#bdbdbd;"></div>
<div class="a" style="left:41px;top:349px;width:1108px;height:1px;background:#d4d4d4;"></div>
<div class="a" style="left:1px;top:349px;width:39px;height:1px;background:#bdbdbd;"></div>
<div class="a" style="left:41px;top:378px;width:1108px;height:1px;background:#d4d4d4;"></div>
<div class="a" style="left:1px;top:378px;width:39px;height:1px;background:#bdbdbd;"></div>
<div class="a" style="left:41px;top:407px;width:1108px;height:1px;background:#d4d4d4;"></div>
<div class="a" style="left:1px;top:407px;width:39px;height:1px;background:#bdbdbd;"></div>
<div class="a" style="left:41px;top:436px;width:1108px;height:1px;background:#d4d4d4;"></div>
<div class="a" style="left:1px;top:436px;width:39px;height:1px;background:#bdbdbd;"></div>
<div class="a" style="left:41px;top:465px;width:1108px;height:1px;background:#d4d4d4;"></div>
<div class="a" style="left:1px;top:465px;width:39px;height:1px;background:#bdbdbd;"></div>
<div class="a" style="left:41px;top:494px;width:1108px;height:1px;background:#d4d4d4;"></div>
<div class="a" style="left:1px;top:494px;width:39px;height:1px;background:#bdbdbd;"></div>
<div class="a" style="left:41px;top:523px;width:1108px;height:1px;background:#d4d4d4;"></div>
<div class="a" style="left:1px;top:523px;width:39px;height:1px;background:#bdbdbd;"></div>
<div class="a" style="left:41px;top:552px;width:1108px;height:1px;background:#d4d4d4;"></div>
<div class="a" style="left:1px;top:552px;width:39px;height:1px;background:#bdbdbd;"></div>
<div class="a" style="left:41px;top:581px;width:1108px;height:1px;background:#d4d4d4;"></div>
<div class="a" style="left:1px;top:581px;width:39px;height:1px;background:#bdbdbd;"></div>
<div class="a" style="left:41px;top:610px;width:1108px;height:1px;background:#d4d4d4;"></div>
<div class="a" style="left:1px;top:610px;width:39px;height:1px;background:#bdbdbd;"></div>
<div class="a" style="left:41px;top:639px;width:1108px;height:1px;background:#d4d4d4;"></div>
<div class="a" style="left:1px;top:639px;width:39px;height:1px;background:#bdbdbd;"></div>
<div class="a" style="left:41px;top:668px;width:1108px;height:1px;background:#d4d4d4;"></div>
<div class="a" style="left:1px;top:668px;width:39px;height:1px;background:#bdbdbd;"></div>
<div class="a" style="left:41px;top:697px;width:1108px;height:1px;background:#d4d4d4;"></div>
<div class="a" style="left:1px;top:697px;width:39px;height:1px;background:#bdbdbd;"></div>
<div class="a" style="left:40px;top:263px;width:1px;height:446px;background:#9e9e9e;"></div>
<div class="a" style="left:1px;top:262px;width:1149px;height:1px;background:#9e9e9e;"></div>
<div class="a" style="left:1149px;top:262px;width:1px;height:448px;background:#9e9e9e;"></div>
<div class="a" style="left:1px;top:709px;width:1149px;height:1px;background:#9e9e9e;"></div>
<div class="a" style="left:319px;top:261px;width:150px;height:2px;background:#217346;"></div>
<div class="a" style="left:39px;top:465px;width:2px;height:30px;background:#217346;"></div>
<svg class="a" style="left:17px;top:240px;" width="20" height="19" viewBox="0 0 20 19"><path d="M19.6 0.5 V18.6 H0.5 Z" fill="#b7b7b7"/></svg>
<div class="a t" id="t71" style="top:237px;line-height:24px;height:24px;font-size:18.5px;color:#262626;left:-213.0px;width:600px;text-align:center;transform-origin:50% 50%;">A</div>
<div class="a t" id="t72" style="top:237px;line-height:24px;height:24px;font-size:18.5px;color:#262626;left:-120.0px;width:600px;text-align:center;transform-origin:50% 50%;">B</div>
<div class="a t" id="t73" style="top:237px;line-height:24px;height:24px;font-size:18.5px;color:#262626;left:-27.0px;width:600px;text-align:center;transform-origin:50% 50%;">C</div>
<div class="a t" id="t74" style="top:237px;line-height:24px;height:24px;font-size:18.5px;color:#217346;left:94.0px;width:600px;text-align:center;transform-origin:50% 50%;">D</div>
<div class="a t" id="t75" style="top:237px;line-height:24px;height:24px;font-size:18.5px;color:#262626;left:215.0px;width:600px;text-align:center;transform-origin:50% 50%;">E</div>
<div class="a t" id="t76" style="top:237px;line-height:24px;height:24px;font-size:18.5px;color:#262626;left:308.0px;width:600px;text-align:center;transform-origin:50% 50%;">F</div>
<div class="a t" id="t77" style="top:237px;line-height:24px;height:24px;font-size:18.5px;color:#262626;left:401.0px;width:600px;text-align:center;transform-origin:50% 50%;">G</div>
<div class="a t" id="t78" style="top:237px;line-height:24px;height:24px;font-size:18.5px;color:#262626;left:494.0px;width:600px;text-align:center;transform-origin:50% 50%;">H</div>
<div class="a t" id="t79" style="top:237px;line-height:24px;height:24px;font-size:18.5px;color:#262626;left:587.0px;width:600px;text-align:center;transform-origin:50% 50%;">I</div>
<div class="a t" id="t80" style="top:237px;line-height:24px;height:24px;font-size:18.5px;color:#262626;left:680.0px;width:600px;text-align:center;transform-origin:50% 50%;">J</div>
<div class="a t" id="t81" style="top:237px;line-height:24px;height:24px;font-size:18.5px;color:#262626;left:773.0px;width:600px;text-align:center;transform-origin:50% 50%;">K</div>
<div class="a t" id="t82" style="top:267px;line-height:24px;height:24px;font-size:18.5px;color:#262626;left:-279.5px;width:600px;text-align:center;transform-origin:50% 50%;">1</div>
<div class="a t" id="t83" style="top:296px;line-height:24px;height:24px;font-size:18.5px;color:#262626;left:-279.5px;width:600px;text-align:center;transform-origin:50% 50%;">2</div>
<div class="a t" id="t84" style="top:325px;line-height:24px;height:24px;font-size:18.5px;color:#262626;left:-279.5px;width:600px;text-align:center;transform-origin:50% 50%;">3</div>
<div class="a t" id="t85" style="top:354px;line-height:24px;height:24px;font-size:18.5px;color:#262626;left:-279.5px;width:600px;text-align:center;transform-origin:50% 50%;">4</div>
<div class="a t" id="t86" style="top:383px;line-height:24px;height:24px;font-size:18.5px;color:#262626;left:-279.5px;width:600px;text-align:center;transform-origin:50% 50%;">5</div>
<div class="a t" id="t87" style="top:412px;line-height:24px;height:24px;font-size:18.5px;color:#262626;left:-279.5px;width:600px;text-align:center;transform-origin:50% 50%;">6</div>
<div class="a t" id="t88" style="top:441px;line-height:24px;height:24px;font-size:18.5px;color:#262626;left:-279.5px;width:600px;text-align:center;transform-origin:50% 50%;">7</div>
<div class="a t" id="t89" style="top:470px;line-height:24px;height:24px;font-size:18.5px;color:#217346;left:-279.5px;width:600px;text-align:center;transform-origin:50% 50%;">8</div>
<div class="a t" id="t90" style="top:499px;line-height:24px;height:24px;font-size:18.5px;color:#262626;left:-279.5px;width:600px;text-align:center;transform-origin:50% 50%;">9</div>
<div class="a t" id="t91" style="top:528px;line-height:24px;height:24px;font-size:18.5px;color:#262626;left:-279.5px;width:600px;text-align:center;transform-origin:50% 50%;">10</div>
<div class="a t" id="t92" style="top:557px;line-height:24px;height:24px;font-size:18.5px;color:#262626;left:-279.5px;width:600px;text-align:center;transform-origin:50% 50%;">11</div>
<div class="a t" id="t93" style="top:586px;line-height:24px;height:24px;font-size:18.5px;color:#262626;left:-279.5px;width:600px;text-align:center;transform-origin:50% 50%;">12</div>
<div class="a t" id="t94" style="top:615px;line-height:24px;height:24px;font-size:18.5px;color:#262626;left:-279.5px;width:600px;text-align:center;transform-origin:50% 50%;">13</div>
<div class="a t" id="t95" style="top:644px;line-height:24px;height:24px;font-size:18.5px;color:#262626;left:-279.5px;width:600px;text-align:center;transform-origin:50% 50%;">14</div>
<div class="a t" id="t96" style="top:673px;line-height:24px;height:24px;font-size:18.5px;color:#262626;left:-279.5px;width:600px;text-align:center;transform-origin:50% 50%;">15</div>
<div class="a" style="left:1px;top:698px;width:39px;height:11px;overflow:hidden;"><div class="a t" style="left:-280px;width:600px;text-align:center;top:5px;line-height:24px;font-size:18.5px;color:#262626;">16</div></div>
<div class="a t" id="t97" style="top:267px;line-height:24px;height:24px;font-size:18.5px;color:#000;left:137.3px;transform-origin:0 50%;transform:scaleX(1.0287);">Value A</div>
<div class="a t" id="t98" style="top:267px;line-height:24px;height:24px;font-size:18.5px;color:#000;left:230.3px;transform-origin:0 50%;transform:scaleX(1.0120);">Value B</div>
<div class="a t" id="t99" style="top:267px;line-height:24px;height:24px;font-size:18.5px;color:#000;left:323.2px;transform-origin:0 50%;transform:scaleX(0.9887);">Average</div>
<div class="a t" id="t100" style="top:296px;line-height:24px;height:24px;font-size:18.5px;color:#000;right:1043.6px;transform-origin:100% 50%;transform:scaleX(1.0399);">2000</div>
<div class="a t" id="t101" style="top:296px;line-height:24px;height:24px;font-size:18.5px;color:#000;right:950.6px;transform-origin:100% 50%;transform:scaleX(1.0677);">0.57456</div>
<div class="a t" id="t102" style="top:296px;line-height:24px;height:24px;font-size:18.5px;color:#000;right:857.6px;transform-origin:100% 50%;transform:scaleX(1.0677);">0.71979</div>
<div class="a t" id="t103" style="top:296px;line-height:24px;height:24px;font-size:18.5px;color:#000;right:708.6px;transform-origin:100% 50%;transform:scaleX(1.0608);">0.647175422</div>
<svg class="a" style="left:320px;top:292px;" width="9" height="9" viewBox="0 0 9 9"><path d="M0 0 H9 L0 9 Z" fill="#0f8a13"/></svg>
<div class="a t" id="t104" style="top:325px;line-height:24px;height:24px;font-size:18.5px;color:#000;right:1043.6px;transform-origin:100% 50%;transform:scaleX(1.0399);">2006</div>
<div class="a t" id="t105" style="top:325px;line-height:24px;height:24px;font-size:18.5px;color:#000;right:950.6px;transform-origin:100% 50%;transform:scaleX(1.0677);">0.85677</div>
<div class="a t" id="t106" style="top:325px;line-height:24px;height:24px;font-size:18.5px;color:#000;right:857.6px;transform-origin:100% 50%;transform:scaleX(1.0677);">1.27897</div>
<div class="a t" id="t107" style="top:325px;line-height:24px;height:24px;font-size:18.5px;color:#000;right:708.6px;transform-origin:100% 50%;transform:scaleX(1.0608);">1.067868053</div>
<svg class="a" style="left:320px;top:321px;" width="9" height="9" viewBox="0 0 9 9"><path d="M0 0 H9 L0 9 Z" fill="#0f8a13"/></svg>
<div class="a t" id="t108" style="top:354px;line-height:24px;height:24px;font-size:18.5px;color:#000;right:1043.6px;transform-origin:100% 50%;transform:scaleX(1.0399);">2007</div>
<div class="a t" id="t109" style="top:354px;line-height:24px;height:24px;font-size:18.5px;color:#000;right:857.6px;transform-origin:100% 50%;transform:scaleX(1.0677);">2.16987</div>
<div class="a t" id="t110" style="top:354px;line-height:24px;height:24px;font-size:18.5px;color:#000;right:708.6px;transform-origin:100% 50%;transform:scaleX(1.0608);">2.169870233</div>
<svg class="a" style="left:320px;top:350px;" width="9" height="9" viewBox="0 0 9 9"><path d="M0 0 H9 L0 9 Z" fill="#0f8a13"/></svg>
<div class="a t" id="t111" style="top:383px;line-height:24px;height:24px;font-size:18.5px;color:#000;right:1043.6px;transform-origin:100% 50%;transform:scaleX(1.0399);">2008</div>
<div class="a t" id="t112" style="top:383px;line-height:24px;height:24px;font-size:18.5px;color:#000;right:857.6px;transform-origin:100% 50%;transform:scaleX(1.0708);">2.3456</div>
<div class="a t" id="t113" style="top:383px;line-height:24px;height:24px;font-size:18.5px;color:#000;right:708.6px;transform-origin:100% 50%;transform:scaleX(1.0608);">2.345601832</div>
<svg class="a" style="left:320px;top:379px;" width="9" height="9" viewBox="0 0 9 9"><path d="M0 0 H9 L0 9 Z" fill="#0f8a13"/></svg>
<div class="a t" id="t114" style="top:412px;line-height:24px;height:24px;font-size:18.5px;color:#000;right:1043.6px;transform-origin:100% 50%;transform:scaleX(1.0399);">2009</div>
<div class="a t" id="t115" style="top:412px;line-height:24px;height:24px;font-size:18.5px;color:#000;right:950.6px;transform-origin:100% 50%;transform:scaleX(1.0677);">3.14341</div>
<div class="a t" id="t116" style="top:412px;line-height:24px;height:24px;font-size:18.5px;color:#000;right:857.6px;transform-origin:100% 50%;transform:scaleX(1.0677);">2.45552</div>
<div class="a t" id="t117" style="top:412px;line-height:24px;height:24px;font-size:18.5px;color:#000;right:708.6px;transform-origin:100% 50%;transform:scaleX(1.0608);">2.799467735</div>
<svg class="a" style="left:320px;top:408px;" width="9" height="9" viewBox="0 0 9 9"><path d="M0 0 H9 L0 9 Z" fill="#0f8a13"/></svg>
<div class="a t" id="t118" style="top:441px;line-height:24px;height:24px;font-size:18.5px;color:#000;right:1043.6px;transform-origin:100% 50%;transform:scaleX(1.0399);">2010</div>
<div class="a t" id="t119" style="top:441px;line-height:24px;height:24px;font-size:18.5px;color:#000;right:950.6px;transform-origin:100% 50%;transform:scaleX(1.0677);">3.78312</div>
<div class="a t" id="t120" style="top:441px;line-height:24px;height:24px;font-size:18.5px;color:#000;right:857.6px;transform-origin:100% 50%;transform:scaleX(1.0677);">3.18727</div>
<div class="a t" id="t121" style="top:441px;line-height:24px;height:24px;font-size:18.5px;color:#000;right:708.6px;transform-origin:100% 50%;transform:scaleX(1.0608);">3.485192628</div>
<svg class="a" style="left:320px;top:437px;" width="9" height="9" viewBox="0 0 9 9"><path d="M0 0 H9 L0 9 Z" fill="#0f8a13"/></svg>
<div class="a t" id="t122" style="top:470px;line-height:24px;height:24px;font-size:18.5px;color:#000;right:1043.6px;transform-origin:100% 50%;transform:scaleX(1.0755);">2011</div>
<div class="a t" id="t123" style="top:470px;line-height:24px;height:24px;font-size:18.5px;color:#000;right:950.6px;transform-origin:100% 50%;transform:scaleX(1.0677);">3.86565</div>
<div class="a t" id="t124" style="top:470px;line-height:24px;height:24px;font-size:18.5px;color:#000;right:857.6px;transform-origin:100% 50%;transform:scaleX(1.0677);">4.16382</div>
<div class="a t" id="t125" style="top:470px;line-height:24px;height:24px;font-size:18.5px;color:#000;right:708.6px;transform-origin:100% 50%;transform:scaleX(1.0608);">4.014736404</div>
<svg class="a" style="left:321px;top:467px;" width="7" height="7" viewBox="0 0 7 7"><path d="M0 0 H7 L0 7 Z" fill="#0f8a13"/></svg>
<div class="a" style="left:285px;top:466px;width:34px;height:23px;background:#d0ecdd;border:1px solid #a3d4b8;"></div>
<svg class="a" style="left:288px;top:469px;" width="16" height="16" viewBox="0 0 16 16"><path d="M8 0.2 L15.8 8 L8 15.8 L0.2 8 Z" fill="#e9c17f"/><path d="M8 4.3 V10.2" stroke="#555" stroke-width="1.8"/><rect x="7.1" y="11" width="1.8" height="1.7" fill="#555"/></svg>
<svg class="a" style="left:309px;top:475px;" width="7" height="5" viewBox="0 0 7 5"><path d="M0.6 0.8 H6 L3.3 4 Z" fill="#444"/></svg>
<div class="a" style="left:318px;top:464px;width:152px;height:32px;border:2px solid #217346;"></div>
<div class="a" style="left:465px;top:491px;width:7px;height:7px;background:#217346;border:1px solid #fff;"></div>
<div class="a" style="left:297px;top:499px;width:440px;height:20px;background:#fff;border:1px solid #bebebe;border-radius:2px;box-shadow:1px 1px 2px rgba(0,0,0,0.22);"></div>
<div class="a t" id="t126" style="top:500px;line-height:18px;height:18px;font-size:12px;color:#444;left:300px;transform-origin:0 50%;transform:scaleX(0.9917);">The formula in this cell refers to a range that has additional numbers adjacent to it.</div>
<div class="a" style="left:1153px;top:237px;width:15px;height:15px;background:#fff;border:1px solid #ababab;"></div>
<svg class="a" style="left:1157px;top:242px;" width="8" height="5" viewBox="0 0 8 5"><path d="M0.3 4.5 H7.3 L3.8 0.5 Z" fill="#606060"/></svg>
<div class="a" style="left:1153px;top:252px;width:15px;height:332px;background:#fff;border:1px solid #c1c1c1;border-top:none;"></div>
<div class="a" style="left:1153px;top:584px;width:15px;height:111px;background:#d3d3d3;"></div>
<div class="a" style="left:1153px;top:695px;width:15px;height:15px;background:#fff;border:1px solid #ababab;"></div>
<svg class="a" style="left:1157px;top:700px;" width="8" height="5" viewBox="0 0 8 5"><path d="M0.3 0.5 H7.3 L3.8 4.5 Z" fill="#606060"/></svg>
<div class="a" style="left:1px;top:710px;width:1170px;height:27px;background:#e6e6e6;"></div>
<div class="a" style="left:1px;top:737px;width:1170px;height:1px;background:#c8c8c8;"></div>
<svg class="a" style="left:28px;top:719px;" width="5" height="8" viewBox="0 0 5 8"><path d="M4.6 0 V7.4 L0 3.7 Z" fill="#c3c3c3"/></svg>
<svg class="a" style="left:57px;top:719px;" width="5" height="8" viewBox="0 0 5 8"><path d="M0 0 V7.4 L4.6 3.7 Z" fill="#c3c3c3"/></svg>
<div class="a" style="left:101px;top:713px;width:1px;height:20px;background:#9e9e9e;"></div>
<div class="a" style="left:166px;top:713px;width:1px;height:20px;background:#9e9e9e;"></div>
<div class="a" style="left:231px;top:713px;width:1px;height:20px;background:#9e9e9e;"></div>
<div class="a" style="left:296px;top:713px;width:1px;height:20px;background:#9e9e9e;"></div>
<div class="a t" id="t127" style="top:714px;line-height:20px;height:20px;font-size:13.3px;color:#444;left:113.5px;transform-origin:0 50%;transform:scaleX(0.9062);">Sheet1</div>
<div class="a t" id="t128" style="top:714px;line-height:20px;height:20px;font-size:13.3px;color:#444;left:178.2px;transform-origin:0 50%;transform:scaleX(0.9062);">Sheet2</div>
<div class="a t" id="t129" style="top:714px;line-height:20px;height:20px;font-size:13.3px;color:#444;left:243.39999999999998px;transform-origin:0 50%;transform:scaleX(0.9062);">Sheet3</div>
<div class="a t" id="t130" style="top:714px;line-height:20px;height:20px;font-size:13.3px;color:#444;left:308.7px;transform-origin:0 50%;transform:scaleX(0.9062);">Sheet4</div>
<div class="a" style="left:361px;top:709px;width:65px;height:23px;background:#fff;border-left:1px solid #9e9e9e;border-right:1px solid #9e9e9e;"></div>
<div class="a" style="left:361px;top:732px;width:65px;height:2px;background:#217346;"></div>
<div class="a t" id="t131" style="top:714px;line-height:20px;height:20px;font-size:13.3px;color:#217346;left:372.8px;transform-origin:0 50%;transform:scaleX(0.9536);-webkit-text-stroke:0.5px #217346;">Sheet5</div>
<svg class="a" style="left:458px;top:714px;" width="18" height="18" viewBox="0 0 18 18"><circle cx="8.8" cy="8.7" r="7.5" fill="none" stroke="#777" stroke-width="1.1"/><path d="M8.8 4.7 V12.7 M4.8 8.7 H12.8" stroke="#666" stroke-width="1.5"/></svg>
<div class="a" style="left:703px;top:718px;width:2px;height:2px;background:#a0a0a0;"></div>
<div class="a" style="left:703px;top:722.5px;width:2px;height:2px;background:#a0a0a0;"></div>
<div class="a" style="left:703px;top:727px;width:2px;height:2px;background:#a0a0a0;"></div>
<div class="a" style="left:720px;top:716px;width:15px;height:15px;background:#fff;border:1px solid #ababab;"></div>
<svg class="a" style="left:725px;top:719px;" width="5" height="9" viewBox="0 0 5 9"><path d="M4.5 0.5 V8 L0.5 4.25 Z" fill="#606060"/></svg>
<div class="a" style="left:735px;top:716px;width:363px;height:15px;background:#fff;border:1px solid #c1c1c1;border-left:none;"></div>
<div class="a" style="left:1098px;top:716px;width:37px;height:15px;background:#d3d3d3;"></div>
<div class="a" style="left:1135px;top:716px;width:15px;height:15px;background:#fff;border:1px solid #ababab;"></div>
<svg class="a" style="left:1141px;top:719px;" width="5" height="9" viewBox="0 0 5 9"><path d="M0.5 0.5 V8 L4.5 4.25 Z" fill="#606060"/></svg>
<div class="a" style="left:1px;top:738px;width:1170px;height:21px;background:#f3f2f1;"></div>
<div class="a t" id="t132" style="top:739px;line-height:18px;height:18px;font-size:12px;color:#444;left:8.7px;transform-origin:0 50%;transform:scaleX(0.8937);">Ready</div>
<svg class="a" style="left:59px;top:742px;" width="15" height="13" viewBox="0 0 15 13"><path d="M0.5 0.8 H13.5" stroke="#444" stroke-width="1.4"/><path d="M0.5 2.5 V12 H6 M13.5 2.5 V5" fill="none" stroke="#444" stroke-width="1"/><path d="M2.5 4.8 H6 M2.5 7 H5 M2.5 9.2 H5" stroke="#444" stroke-width="0.9"/><circle cx="10" cy="8.7" r="3.6" fill="#f3f2f1" stroke="#444" stroke-width="1"/><circle cx="10" cy="8.7" r="1.6" fill="#444"/></svg>
<div class="a" style="left:860px;top:738px;width:40px;height:21px;background:#c8c6c4;"></div>
<div class="a" style="left:873px;top:741px;width:1px;height:13px;background:#262626;"></div>
<div class="a" style="left:873px;top:741px;width:13px;height:1px;background:#262626;"></div>
<div class="a" style="left:877px;top:741px;width:1px;height:13px;background:#262626;"></div>
<div class="a" style="left:873px;top:745px;width:13px;height:1px;background:#262626;"></div>
<div class="a" style="left:881px;top:741px;width:1px;height:13px;background:#262626;"></div>
<div class="a" style="left:873px;top:749px;width:13px;height:1px;background:#262626;"></div>
<div class="a" style="left:885px;top:741px;width:1px;height:13px;background:#262626;"></div>
<div class="a" style="left:873px;top:753px;width:13px;height:1px;background:#262626;"></div>
<svg class="a" style="left:873px;top:741px;" width="13" height="13" viewBox="0 0 13 13"><rect x="0.5" y="0.5" width="12" height="12" fill="none" stroke="#262626" stroke-width="1.4"/></svg>
<div class="a" style="left:913px;top:741px;width:14px;height:13px;border:1px solid #3b3a39;"></div>
<div class="a" style="left:916px;top:743px;width:8px;height:9px;border:1px solid #3b3a39;"></div>
<div class="a" style="left:918px;top:745px;width:4px;height:1px;background:#3b3a39;"></div>
<div class="a" style="left:918px;top:747px;width:4px;height:1px;background:#3b3a39;"></div>
<div class="a" style="left:918px;top:749px;width:4px;height:1px;background:#3b3a39;"></div>
<div class="a" style="left:953px;top:741px;width:14px;height:13px;border:1px solid #3b3a39;"></div>
<div class="a" style="left:957px;top:741px;width:1px;height:8px;background:#3b3a39;"></div>
<div class="a" style="left:962px;top:741px;width:1px;height:8px;background:#3b3a39;"></div>
<div class="a" style="left:953px;top:748px;width:10px;height:1px;background:#3b3a39;"></div>
<div class="a" style="left:986px;top:748px;width:8px;height:1px;background:#444;"></div>
<div class="a" style="left:999px;top:748px;width:100px;height:1px;background:#a0a0a0;"></div>
<div class="a" style="left:1049px;top:745px;width:1px;height:7px;background:#a0a0a0;"></div>
<div class="a" style="left:1054px;top:743px;width:5px;height:11px;background:#767676;"></div>
<div class="a" style="left:1103px;top:748px;width:9px;height:1px;background:#444;"></div>
<div class="a" style="left:1107px;top:744px;width:1px;height:9px;background:#444;"></div>
<div class="a t" id="t133" style="top:739px;line-height:18px;height:18px;font-size:12px;color:#444;left:1125.3px;transform-origin:0 50%;transform:scaleX(0.8957);">145%</div>
<div class="a" style="left:0px;top:31px;width:1px;height:729px;background:#0e6b39;"></div>
<div class="a" style="left:1171px;top:0px;width:1px;height:760px;background:#24804e;"></div>
<div class="a" style="left:1172px;top:0px;width:1px;height:760px;background:#000;"></div>
<div class="a" style="left:0px;top:759px;width:1172px;height:1px;background:#1c7443;"></div>
</body></html>
